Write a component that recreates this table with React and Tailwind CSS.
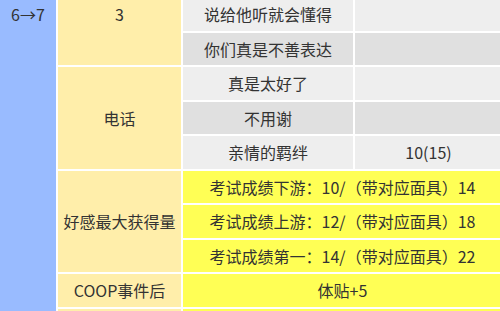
import React from 'react';

const font = { fontFamily: '"Microsoft YaHei", "Noto Sans CJK SC", "Noto Sans", sans-serif' };

const light = 'bg-[#eeeeee]';
const dark = 'bg-[#e0e0e0]';

function App() {
  return (
    <div className="w-[500px] h-[311px] overflow-hidden bg-white" style={font}>
      <table className="-mt-[4px] -ml-[2px] border-separate border-spacing-[2px] text-[16px] text-[#333] text-center table-fixed w-[504px]">
        <colgroup>
          <col className="w-[56px]" />
          <col className="w-[123px]" />
          <col className="w-[170px]" />
          <col className="w-[147px]" />
        </colgroup>
        <tbody>
          <tr className="h-[32.5px]">
            <td rowSpan={10} className="bg-[#99bbff] align-top pt-[4px]">6→7</td>
            <td rowSpan={2} className="bg-[#ffeeaa] align-top pt-[4px]">3</td>
            <td className={light}>说给他听就会懂得</td>
            <td className={light}></td>
          </tr>
          <tr className="h-[32.5px]">
            <td className={dark}>你们真是不善表达</td>
            <td className={dark}></td>
          </tr>
          <tr className="h-[32.5px]">
            <td rowSpan={3} className="bg-[#ffeeaa]">电话</td>
            <td className={light}>真是太好了</td>
            <td className={light}></td>
          </tr>
          <tr className="h-[32.5px]">
            <td className={dark}>不用谢</td>
            <td className={dark}></td>
          </tr>
          <tr className="h-[32.5px]">
            <td className={light}>亲情的羁绊</td>
            <td className={light}>10(15)</td>
          </tr>
          <tr className="h-[32.5px]">
            <td rowSpan={3} className="bg-[#ffeeaa]">好感最大获得量</td>
            <td colSpan={2} className="bg-[#ffff55]">考试成绩下游：10/（带对应面具）14</td>
          </tr>
          <tr className="h-[32.5px]">
            <td colSpan={2} className="bg-[#ffff55]">考试成绩上游：12/（带对应面具）18</td>
          </tr>
          <tr className="h-[32.5px]">
            <td colSpan={2} className="bg-[#ffff55]">考试成绩第一：14/（带对应面具）22</td>
          </tr>
          <tr className="h-[32.5px]">
            <td className="bg-[#ffeeaa]">COOP事件后</td>
            <td colSpan={2} className="bg-[#ffff55]">体贴+5</td>
          </tr>
          <tr className="h-[32.5px]">
            <td className="bg-[#ffeeaa]"></td>
            <td colSpan={2} className="bg-[#ffff55]"></td>
          </tr>
        </tbody>
      </table>
    </div>
  );
}

export default App;
